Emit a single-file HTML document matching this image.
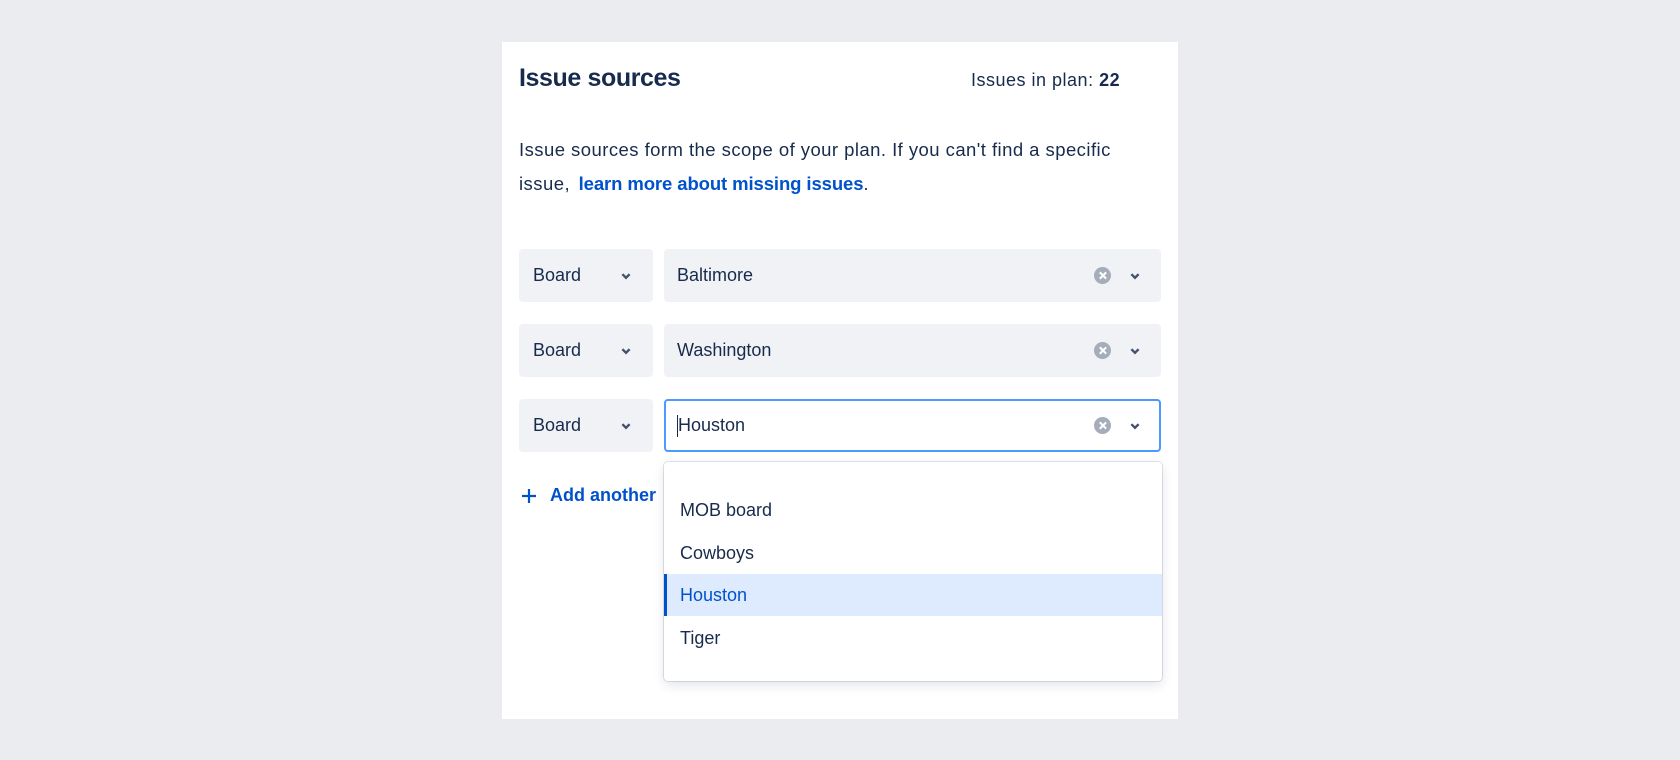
<!DOCTYPE html>
<html><head><style>
*{margin:0;padding:0;box-sizing:border-box}
body{width:1680px;height:760px;background:#ebecf0;font-family:"Liberation Sans",sans-serif;color:#172b4d;position:relative;overflow:hidden}
.card{position:absolute;left:502px;top:42px;width:676px;height:677px;background:#fff}
.a{position:absolute}
.sel{position:absolute;background:#f1f2f5;border-radius:4px;height:53px;font-size:18px;display:flex;align-items:center}
.chev{position:absolute;width:12px;height:12px}
.clr{position:absolute;width:17px;height:17px;border-radius:50%;background:#a5adba}
.clr:before,.clr:after{content:"";position:absolute;left:8px;top:4px;width:1.8px;height:9px;background:#fff;transform:rotate(45deg)}
.clr:after{transform:rotate(-45deg)}
.item{position:absolute;left:0;width:100%;height:42px;font-size:18px;padding-left:16px;display:flex;align-items:center}
</style></head><body>
<div class="card"></div>
<div class="a" style="left:519px;top:64px;font-size:25px;font-weight:bold;letter-spacing:-0.4px">Issue sources</div>
<div class="a" style="left:971px;top:70px;font-size:18px;letter-spacing:0.5px">Issues in plan: <b>22</b></div>
<div class="a" style="left:519px;top:133px;font-size:18.5px;letter-spacing:0.45px;line-height:34px;width:650px">Issue sources form the scope of your plan. If you can't find a specific<br>issue, <span style="color:#0052cc;font-weight:bold;letter-spacing:-0.1px;margin-left:3px">learn more about missing issues</span>.</div>

<div class="sel" style="left:519px;top:249px;width:134px;padding-left:14px">Board<svg class="chev" style="left:101px;top:21px" viewBox="0 0 10 10"><path d="M2 3.5L5 6.5 8 3.5" fill="none" stroke="#42526e" stroke-width="2"/></svg></div>
<div class="sel" style="left:664px;top:249px;width:497px;padding-left:13px">Baltimore<span class="clr" style="left:430px;top:18px"></span><svg class="chev" style="left:465px;top:21px" viewBox="0 0 10 10"><path d="M2 3.5L5 6.5 8 3.5" fill="none" stroke="#42526e" stroke-width="2"/></svg></div>

<div class="sel" style="left:519px;top:324px;width:134px;padding-left:14px">Board<svg class="chev" style="left:101px;top:21px" viewBox="0 0 10 10"><path d="M2 3.5L5 6.5 8 3.5" fill="none" stroke="#42526e" stroke-width="2"/></svg></div>
<div class="sel" style="left:664px;top:324px;width:497px;padding-left:13px">Washington<span class="clr" style="left:430px;top:18px"></span><svg class="chev" style="left:465px;top:21px" viewBox="0 0 10 10"><path d="M2 3.5L5 6.5 8 3.5" fill="none" stroke="#42526e" stroke-width="2"/></svg></div>

<div class="sel" style="left:519px;top:399px;width:134px;padding-left:14px">Board<svg class="chev" style="left:101px;top:21px" viewBox="0 0 10 10"><path d="M2 3.5L5 6.5 8 3.5" fill="none" stroke="#42526e" stroke-width="2"/></svg></div>
<div class="sel" style="left:664px;top:399px;width:497px;padding-left:11px;background:#fff;border:2px solid #4c9aff"><span style="border-left:1.5px solid #172b4d;height:22px;margin-right:0"></span>Houston<span class="clr" style="left:428px;top:16px"></span><svg class="chev" style="left:463px;top:19px" viewBox="0 0 10 10"><path d="M2 3.5L5 6.5 8 3.5" fill="none" stroke="#42526e" stroke-width="2"/></svg></div>

<div class="a" style="left:520px;top:485px;font-size:18px;font-weight:bold;color:#0052cc;display:flex;align-items:center"><svg width="18" height="18" viewBox="0 0 18 18" style="margin-right:12px"><path d="M9 2V16M2 9H16" stroke="#0052cc" stroke-width="2.2"/></svg>Add another</div>

<div class="a" style="left:664px;top:462px;width:498px;height:219px;background:#fff;border-radius:4px;box-shadow:0 0 0 1px rgba(9,30,66,.12),0 4px 11px rgba(9,30,66,.12);overflow:hidden">
<div class="item" style="top:27px">MOB board</div>
<div class="item" style="top:70px">Cowboys</div>
<div class="item" style="top:112px;background:#deebff;color:#0052cc;border-left:3px solid #0052cc;padding-left:13px">Houston</div>
<div class="item" style="top:155px">Tiger</div>
</div>
</body></html>
